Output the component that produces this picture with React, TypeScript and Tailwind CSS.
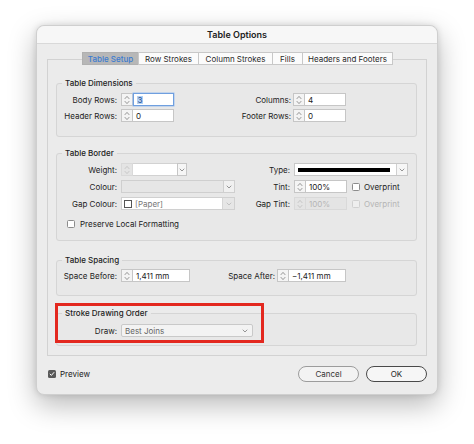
import React from "react";

function SpinIcon({ color = "#8a8a8a" }: { color?: string }) {
  return (
    <svg width="6" height="10" viewBox="0 0 6 10" fill="none">
      <path d="M1 3.6 L3 1.4 L5 3.6" stroke={color} strokeWidth="0.9" strokeLinecap="round" strokeLinejoin="round" />
      <path d="M1 6.4 L3 8.6 L5 6.4" stroke={color} strokeWidth="0.9" strokeLinecap="round" strokeLinejoin="round" />
    </svg>
  );
}

function DownIcon({ color = "#8a8a8a" }: { color?: string }) {
  return (
    <svg width="6" height="4" viewBox="0 0 6 4" fill="none">
      <path d="M1 1 L3 3 L5 1" stroke={color} strokeWidth="0.9" strokeLinecap="round" strokeLinejoin="round" />
    </svg>
  );
}

function SpinInput({
  w,
  value,
  focus = false,
  disabled = false,
}: {
  w: string;
  value: string;
  focus?: boolean;
  disabled?: boolean;
}) {
  return (
    <div className={`flex h-[13px] ${w}`}>
      <div
        className={`flex w-[12px] shrink-0 items-center justify-center border ${
          disabled ? "border-[#d9d9d9] bg-[#e4e4e4]" : "border-[#c6c6c6] bg-[#f4f4f4]"
        }`}
      >
        <SpinIcon color={disabled ? "#c2c2c2" : "#8a8a8a"} />
      </div>
      <div
        className={`flex flex-1 items-center px-[3px] text-[8px] leading-none ${
          focus
            ? "border border-[#6f9fdf] bg-white shadow-[0_0_0_0.5px_#9dc0ee]"
            : disabled
            ? "border border-l-0 border-[#d9d9d9] bg-[#e4e4e4] text-[#b5b5b5]"
            : "border border-l-0 border-[#c6c6c6] bg-white text-[#222]"
        }`}
      >
        {focus ? <span className="bg-[#b3d0f4] px-[0.5px] text-[#24518f]">{value}</span> : value}
      </div>
    </div>
  );
}

function Label({ w, children, disabled = false }: { w: string; children: React.ReactNode; disabled?: boolean }) {
  return (
    <div className={`${w} shrink-0 whitespace-nowrap text-right text-[8px] leading-none ${disabled ? "text-[#333]" : "text-[#222]"}`}>
      {children}
    </div>
  );
}

function CheckBox({ checked = false, disabled = false }: { checked?: boolean; disabled?: boolean }) {
  if (checked) {
    return (
      <div className="flex h-[8px] w-[8px] items-center justify-center rounded-[1.5px] bg-[#5a5a5a]">
        <svg width="6" height="6" viewBox="0 0 6 6" fill="none">
          <path d="M1.1 3.1 L2.4 4.4 L4.9 1.5" stroke="white" strokeWidth="1" strokeLinecap="round" strokeLinejoin="round" />
        </svg>
      </div>
    );
  }
  return (
    <div
      className={`h-[8px] w-[8px] rounded-[1.5px] border ${
        disabled ? "border-[#d0d0d0] bg-[#eeeeee]" : "border-[#8c8c8c] bg-white"
      }`}
    />
  );
}

function Group({
  title,
  className,
  children,
}: {
  title: string;
  className: string;
  children: React.ReactNode;
}) {
  return (
    <fieldset className={`w-[361px] rounded-[3px] border border-[#d5d5d5] bg-[#e8e8e8] px-0 ${className}`}>
      <legend className="ml-[5px] px-[3px] text-[8px] font-medium leading-[10px] text-[#222]">{title}</legend>
      {children}
    </fieldset>
  );
}

export default function App() {
  const tabs: { label: string; w: string; active?: boolean }[] = [
    { label: "Table Setup", w: "w-[56px]", active: true },
    { label: "Row Strokes", w: "w-[60px]" },
    { label: "Column Strokes", w: "w-[74px]" },
    { label: "Fills", w: "w-[30px]" },
    { label: "Headers and Footers", w: "w-[91px]" },
  ];

  return (
    <div className="h-[444px] w-[474px] overflow-hidden bg-white pt-[25px] pl-[36px] font-['Inter',sans-serif]">
      <div className="flex h-[370px] w-[402px] flex-col rounded-[8px] border border-[#cfcfcf] bg-[#ececec] shadow-[0_10px_28px_rgba(0,0,0,0.28),0_0_6px_rgba(0,0,0,0.12)]">
        {/* Title bar */}
        <div className="flex h-[18px] shrink-0 items-center justify-center rounded-t-[8px] border-b border-[#d9d9d9] bg-[#f7f7f7] text-[9px] font-semibold text-[#222]">
          Table Options
        </div>

        {/* Body */}
        <div className="flex flex-col pt-[8px]">
          {/* Tabs */}
          <div className="relative z-10 flex justify-center pl-[1px]">
            {tabs.map((t, i) => (
              <div
                key={t.label}
                className={`flex h-[13px] items-center justify-center whitespace-nowrap border-y border-l text-[8px] leading-none ${t.w} ${
                  i === tabs.length - 1 ? "border-r" : ""
                } ${
                  t.active
                    ? "border-[#b0b0b0] bg-[#b7b7b7] font-medium text-[#3b7bd0]"
                    : "border-[#c8c8c8] bg-[#fbfbfb] text-[#2a2a2a]"
                }`}
              >
                {t.label}
              </div>
            ))}
          </div>

          {/* Panel */}
          <div className="relative mx-[10px] -mt-[6px] border border-[#d2d2d2] bg-[#ebebeb] pt-[18px] pb-[9px] pl-[8px]">
            {/* Table Dimensions */}
            <Group title="Table Dimensions" className="">
              <div className="flex pt-[5px] pb-[14px]">
                <div className="flex w-[158px] flex-col gap-[3px]">
                  <div className="flex h-[13px] items-center gap-[4px]">
                    <Label w="w-[60px]">Body Rows:</Label>
                    <SpinInput w="w-[53px]" value="3" focus />
                  </div>
                  <div className="flex h-[13px] items-center gap-[4px]">
                    <Label w="w-[60px]">Header Rows:</Label>
                    <SpinInput w="w-[53px]" value="0" />
                  </div>
                </div>
                <div className="flex flex-col gap-[3px]">
                  <div className="flex h-[13px] items-center gap-[2px]">
                    <Label w="w-[76px]">Columns:</Label>
                    <SpinInput w="w-[53px]" value="4" />
                  </div>
                  <div className="flex h-[13px] items-center gap-[2px]">
                    <Label w="w-[76px]">Footer Rows:</Label>
                    <SpinInput w="w-[53px]" value="0" />
                  </div>
                </div>
              </div>
            </Group>

            {/* Table Border */}
            <Group title="Table Border" className="mt-[11px]">
              <div className="flex flex-col pt-[5px] pb-[11px]">
                <div className="flex">
                  <div className="flex w-[183px] flex-col gap-[4px]">
                    <div className="flex h-[13px] items-center gap-[4px]">
                      <Label w="w-[60px]">Weight:</Label>
                      <div className="flex h-[13px]">
                        <div className="flex w-[12px] items-center justify-center border border-[#d9d9d9] bg-[#e4e4e4]">
                          <SpinIcon color="#c4c4c4" />
                        </div>
                        <div className="w-[44px] border-y border-[#d2d2d2] bg-white" />
                        <div className="flex w-[10px] items-center justify-center border border-[#c6c6c6] bg-[#f6f6f6]">
                          <DownIcon />
                        </div>
                      </div>
                    </div>
                    <div className="flex h-[13px] items-center gap-[4px]">
                      <Label w="w-[60px]">Colour:</Label>
                      <div className="flex h-[13px] w-[114px] border border-[#cfcfcf] bg-[#e6e6e6]">
                        <div className="flex-1" />
                        <div className="flex w-[11px] items-center justify-center border-l border-[#cfcfcf] bg-[#f0f0f0]">
                          <DownIcon />
                        </div>
                      </div>
                    </div>
                    <div className="flex h-[13px] items-center gap-[4px]">
                      <Label w="w-[60px]">Gap Colour:</Label>
                      <div className="flex h-[13px] w-[114px] border border-[#d0d0d0] bg-white">
                        <div className="flex flex-1 items-center gap-[3px] pl-[2px]">
                          <div className="h-[8px] w-[8px] border border-[#555] bg-white" />
                          <span className="text-[8px] leading-none text-[#777]">[Paper]</span>
                        </div>
                        <div className="flex w-[12px] items-center justify-center border-l border-[#d6d6d6] bg-[#e6e6e6]">
                          <DownIcon color="#bdbdbd" />
                        </div>
                      </div>
                    </div>
                  </div>
                  <div className="flex flex-col gap-[4px]">
                    <div className="flex h-[13px] items-center gap-[4px]">
                      <Label w="w-[50px]">Type:</Label>
                      <div className="flex h-[13px] w-[114px] border border-[#c8c8c8] bg-white">
                        <div className="flex flex-1 items-center pl-[3px] pr-[6px]">
                          <div className="h-[4px] w-full bg-black" />
                        </div>
                        <div className="flex w-[11px] items-center justify-center border-l border-[#d0d0d0] bg-[#f6f6f6]">
                          <DownIcon />
                        </div>
                      </div>
                    </div>
                    <div className="flex h-[13px] items-center gap-[4px]">
                      <Label w="w-[50px]">Tint:</Label>
                      <SpinInput w="w-[53px]" value="100%" />
                      <div className="ml-[1px] flex items-center gap-[4px]">
                        <CheckBox />
                        <span className="text-[8px] leading-none text-[#222]">Overprint</span>
                      </div>
                    </div>
                    <div className="flex h-[13px] items-center gap-[4px]">
                      <Label w="w-[50px]">Gap Tint:</Label>
                      <SpinInput w="w-[53px]" value="100%" disabled />
                      <div className="ml-[1px] flex items-center gap-[4px]">
                        <CheckBox disabled />
                        <span className="text-[8px] leading-none text-[#b5b5b5]">Overprint</span>
                      </div>
                    </div>
                  </div>
                </div>
                <div className="mt-[9px] flex h-[10px] items-center gap-[5px] pl-[10px]">
                  <CheckBox />
                  <span className="text-[8px] leading-none text-[#222]">Preserve Local Formatting</span>
                </div>
              </div>
            </Group>

            {/* Table Spacing */}
            <Group title="Table Spacing" className="mt-[14px]">
              <div className="flex pt-[4px] pb-[13px]">
                <div className="flex h-[13px] w-[165px] items-center gap-[4px]">
                  <Label w="w-[60px]">Space Before:</Label>
                  <SpinInput w="w-[69px]" value="1,411 mm" />
                </div>
                <div className="flex h-[13px] items-center gap-[2px]">
                  <Label w="w-[53px]">Space After:</Label>
                  <SpinInput w="w-[69px]" value="−1,411 mm" />
                </div>
              </div>
            </Group>

            {/* Stroke Drawing Order */}
            <Group title="Stroke Drawing Order" className="mt-[12px]">
              <div className="flex pt-[6px] pb-[8px]">
                <div className="flex h-[13px] items-center gap-[4px]">
                  <Label w="w-[60px]">Draw:</Label>
                  <div className="flex h-[13px] w-[132px] items-center rounded-[2px] border border-[#c9c9c9] bg-[#f3f3f3] pl-[3px] pr-[4px]">
                    <span className="flex-1 text-[8px] leading-none text-[#666]">Best Joins</span>
                    <DownIcon />
                  </div>
                </div>
              </div>
            </Group>

            {/* Red annotation box */}
            <div className="pointer-events-none absolute left-[7px] top-[243px] h-[40px] w-[209px] border-[3px] border-[#e3281f]" />
          </div>

          {/* Footer */}
          <div className="mt-[10px] flex h-[16px] items-center pl-[11px] pr-[10px]">
            <div className="flex items-center gap-[4px]">
              <CheckBox checked />
              <span className="text-[8px] leading-none text-[#222]">Preview</span>
            </div>
            <div className="ml-auto flex gap-[7px]">
              <div className="flex h-[16px] w-[61px] items-center justify-center rounded-full border border-[#9c9c9c] bg-[#f3f3f3] text-[8px] text-[#333]">
                Cancel
              </div>
              <div className="flex h-[16px] w-[61px] items-center justify-center rounded-full border-[1.5px] border-[#4a4a4a] bg-[#f6f6f6] text-[8px] text-[#222]">
                OK
              </div>
            </div>
          </div>
        </div>
      </div>
    </div>
  );
}
